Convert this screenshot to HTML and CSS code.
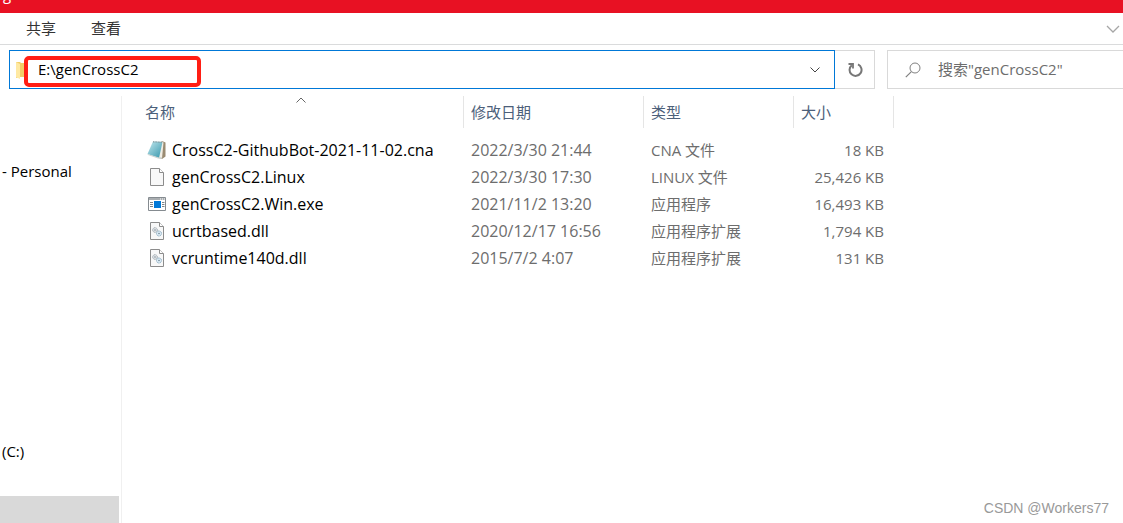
FILE: index.html
```
<!DOCTYPE html>
<html lang="zh-CN">
<head>
    <meta charset="utf-8">
    <title>E:\genCrossC2</title>
    <link rel="stylesheet" href="styles.css">
</head>
<body>
    <div class="window">
        <div class="titlebar"><span>g</span></div>

        <!-- Ribbon tabs -->
        <div class="ribbon">
            <button class="tab">共享</button>
            <button class="tab">查看</button>
            <button class="ribbon-toggle" aria-label="展开功能区">
                <svg width="14" height="8" viewBox="0 0 14 8"><path d="M1 1l6 6 6-6" fill="none" stroke="#a6a6a6" stroke-width="1.3"/></svg>
            </button>
        </div>

        <!-- Address bar and search -->
        <div class="toolbar">
            <div class="address">
                <svg class="folder" width="16" height="18" viewBox="0 0 16 18">
                    <path d="M0 1h4l1 1h7v14H4l-4 1z" fill="#f3cf68"/>
                    <path d="M0 1l4 2v15l-4-2z" fill="#ffe9a2"/>
                </svg>
                <input class="path" type="text" value="E:\genCrossC2" aria-label="地址">
                <button class="drop" aria-label="以前的位置">
                    <svg width="10" height="6" viewBox="0 0 10 6"><path d="M0.5 0.5L5 5l4.500-4.500" fill="none" stroke="#444"/></svg>
                </button>
                <div class="mark"></div>
            </div>
            <button class="refresh" aria-label="刷新">
                <svg width="16" height="16" viewBox="0 0 16 16">
                    <path d="M11 2.400A6 6 0 1 1 4.800 3.200" fill="none" stroke="#777" stroke-width="2"/>
                    <path d="M1.500 2h4.500v4.500" fill="none" stroke="#777" stroke-width="1.800"/>
                </svg>
            </button>
            <div class="search">
                <svg width="16" height="16" viewBox="0 0 16 16">
                    <circle cx="10" cy="6" r="5" fill="none" stroke="#808080"/>
                    <path d="M6.400 9.600L0.800 15.200" stroke="#808080" stroke-width="1.200"/>
                </svg>
                <input type="text" placeholder='搜索"genCrossC2"' aria-label="搜索">
            </div>
        </div>

        <div class="main">
            <nav class="sidebar">
                <a class="item personal" href="#">- Personal</a>
                <a class="item disk" href="#">(C:)</a>
                <a class="item selected" href="#" aria-label="E:"></a>
            </nav>

            <div class="files">
                <svg class="sort" width="10" height="6" viewBox="0 0 10 6"><path d="M0.500 5.500L5 1l4.500 4.500" fill="none" stroke="#666"/></svg>
                <table>
                    <thead>
                        <tr>
                            <th class="name">名称</th>
                            <th class="date">修改日期</th>
                            <th class="type">类型</th>
                            <th class="size">大小</th>
                        </tr>
                    </thead>
                    <tbody>
                        <tr>
                            <td class="name"><div class="file">
                                <svg width="20" height="20" viewBox="0 0 20 20">
                                    <defs><linearGradient id="note" x1="0" y1="0" x2="1" y2="1"><stop offset="0" stop-color="#c4e9ef"/><stop offset="1" stop-color="#3495ab"/></linearGradient></defs>
                                    <path d="M15 1l3.500 1.500v14L15 19l-3-1z" fill="#9a8b72"/>
                                    <path d="M15 1.500l1.500 1-1.500 16-4-1z" fill="#f1eee5"/>
                                    <path d="M6 1.500l9.500.5-3.500 16L0.500 14z" fill="url(#note)"/>
                                    <path d="M0.500 14L12 17.500l3-.5-1 2-3-.500L1 15z" fill="#cbd3d2"/>
                                    <path d="M6 1.800l9.500.4" stroke="#83969a" stroke-width="1.200" stroke-dasharray="1 .6"/>
                                </svg>CrossC2-GithubBot-2021-11-02.cna</div></td>
                            <td class="date">2022/3/30 21:44</td>
                            <td>CNA 文件</td>
                            <td class="num">18 KB</td>
                        </tr>
                        <tr>
                            <td class="name"><div class="file">
                                <svg width="20" height="20" viewBox="0 0 20 20">
                                    <path d="M3.500 1.500h9l4 4v13h-13z" fill="#f8f8f8" stroke="#8c8c8c"/>
                                    <path d="M12.500 1.500v4h4" fill="#fff" stroke="#8c8c8c"/>
                                </svg>genCrossC2.Linux</div></td>
                            <td class="date">2022/3/30 17:30</td>
                            <td>LINUX 文件</td>
                            <td class="num">25,426 KB</td>
                        </tr>
                        <tr>
                            <td class="name"><div class="file">
                                <svg width="20" height="20" viewBox="0 0 20 20">
                                    <path d="M1.500 3.500h17v13h-17z" fill="#fff" stroke="#858b90"/>
                                    <path d="M2 4h16v2H2z" fill="#a9adb0"/>
                                    <path d="M13 5h1m1 0h1m1 0h1" stroke="#fff"/>
                                    <path d="M7 7h7v7H7z" fill="#0078d7"/>
                                    <path d="M3 8.500h3M3 10.500h3M3 12.500h3M15 8.500h2.500M15 10.500h2.500M15 12.500h2.500" stroke="#7e8488"/>
                                </svg>genCrossC2.Win.exe</div></td>
                            <td class="date">2021/11/2 13:20</td>
                            <td>应用程序</td>
                            <td class="num">16,493 KB</td>
                        </tr>
                        <tr>
                            <td class="name"><div class="file">
                                <svg width="20" height="20" viewBox="0 0 20 20">
                                    <path d="M3.500 1.500h9l4 4v13h-13z" fill="#f8f8f8" stroke="#8c8c8c"/>
                                    <path d="M12.500 1.500v4h4" fill="#fff" stroke="#8c8c8c"/>
                                    <circle cx="8" cy="9" r="2.300" fill="#e6eaed" stroke="#98a2a9" stroke-dasharray="1.200 .5"/>
                                    <circle cx="8" cy="9" r=".8" fill="#7e8992"/>
                                    <circle cx="12" cy="12.500" r="2.500" fill="#dcebf5" stroke="#8aaabf" stroke-dasharray="1.200 .5"/>
                                    <circle cx="12" cy="12.500" r=".8" fill="#6f8798"/>
                                </svg>ucrtbased.dll</div></td>
                            <td class="date">2020/12/17 16:56</td>
                            <td>应用程序扩展</td>
                            <td class="num">1,794 KB</td>
                        </tr>
                        <tr>
                            <td class="name"><div class="file">
                                <svg width="20" height="20" viewBox="0 0 20 20">
                                    <path d="M3.500 1.500h9l4 4v13h-13z" fill="#f8f8f8" stroke="#8c8c8c"/>
                                    <path d="M12.500 1.500v4h4" fill="#fff" stroke="#8c8c8c"/>
                                    <circle cx="8" cy="9" r="2.300" fill="#e6eaed" stroke="#98a2a9" stroke-dasharray="1.200 .5"/>
                                    <circle cx="8" cy="9" r=".8" fill="#7e8992"/>
                                    <circle cx="12" cy="12.500" r="2.500" fill="#dcebf5" stroke="#8aaabf" stroke-dasharray="1.200 .5"/>
                                    <circle cx="12" cy="12.500" r=".8" fill="#6f8798"/>
                                </svg>vcruntime140d.dll</div></td>
                            <td class="date">2015/7/2 4:07</td>
                            <td>应用程序扩展</td>
                            <td class="num">131 KB</td>
                        </tr>
                    </tbody>
                </table>
            </div>
        </div>
        <div class="watermark">CSDN @Workers77</div>
    </div>
</body>
</html>
```
FILE: styles.css
```
* { box-sizing: border-box; }
body {
    margin: 0;
    background: #fff;
    color: #000;
    font-family: "Open Sans", "Noto Sans CJK SC", sans-serif;
    font-size: 15px;
    line-height: 22px;
}
button, input {
    font: inherit;
    border: none;
    background: none;
    padding: 0;
    outline: none;
}
svg { display: block; flex: none; }
.window {
    position: relative;
    display: flex;
    flex-direction: column;
    height: 100vh;
    overflow: hidden;
}
.titlebar {
    flex: none;
    height: 13px;
    padding-left: 3px;
    overflow: hidden;
    background: #e81123;
    color: #fff;
}
.titlebar span { display: block; margin-top: -17px; }

/* Ribbon */
.ribbon {
    flex: none;
    display: flex;
    align-items: center;
    gap: 35px;
    height: 32px;
    padding: 0 3px 0 26px;
    border-bottom: 1px solid #dadbdc;
}
.tab { padding-bottom: 2px; color: #333; }
.ribbon-toggle { margin-left: auto; }

/* Address row */
.toolbar {
    flex: none;
    display: flex;
    height: 51px;
    padding: 5px 0 7px 9px;
}
.address {
    position: relative;
    flex: 1;
    display: flex;
    align-items: center;
    padding: 0 14px 0 6px;
    border: 1px solid #0078d7;
}
.path { flex: 1; min-width: 0; margin-left: 6px; padding-bottom: 2px; }
.mark {
    position: absolute;
    left: 14px;
    top: 5px;
    width: 177px;
    height: 31px;
    border: 4px solid #ff1e14;
    border-radius: 5px;
}
.refresh {
    display: flex;
    align-items: center;
    justify-content: center;
    width: 40px;
    margin-right: 12px;
    border: 1px solid #d9d9d9;
    border-left: none;
}
.search {
    display: flex;
    align-items: center;
    gap: 17px;
    width: 236px;
    padding-left: 17px;
    border: 1px solid #d9d9d9;
    border-right: none;
}
.search input { flex: 1; min-width: 0; padding-bottom: 2px; }
.search input::placeholder { color: #6d6d6d; opacity: 1; }

/* Navigation pane */
.main { flex: 1; display: flex; min-height: 0; }
.sidebar {
    flex: none;
    display: flex;
    flex-direction: column;
    width: 122px;
    padding: 62px 2px 0 0;
    border-right: 1px solid #f0f0f0;
}
.item {
    flex: none;
    height: 27px;
    padding-left: 2px;
    line-height: 27px;
    color: #000;
    text-decoration: none;
}
.disk { margin-top: 253px; }
.selected { margin-top: 31px; background: #d9d9d9; }

/* File list */
.files { position: relative; flex: 1; padding-left: 16px; }
.sort { position: absolute; left: 174px; top: 1px; }
table { border-collapse: separate; border-spacing: 0; table-layout: fixed; width: 756px; }
th {
    height: 32px;
    padding: 0 7px;
    border-right: 1px solid #e5e5e5;
    color: #4c607a;
    font-weight: normal;
    text-align: left;
}
th.name { width: 326px; }
th.date { width: 180px; }
th.type { width: 150px; }
th.size { width: 100px; }
tbody::before { content: ""; display: block; height: 8px; }
td {
    height: 27px;
    padding: 0 7px;
    color: #6d6d6d;
    white-space: nowrap;
}
td.name { padding-left: 9px; color: #000; }
td.name, td.date { font-size: 16px; }
td.num { padding-right: 10px; text-align: right; }
.file { display: flex; align-items: center; gap: 5px; }

.watermark {
    position: absolute;
    right: 14px;
    bottom: 4px;
    color: #999;
    font-family: "Liberation Sans", Arial, sans-serif;
    font-size: 14px;
}
```
